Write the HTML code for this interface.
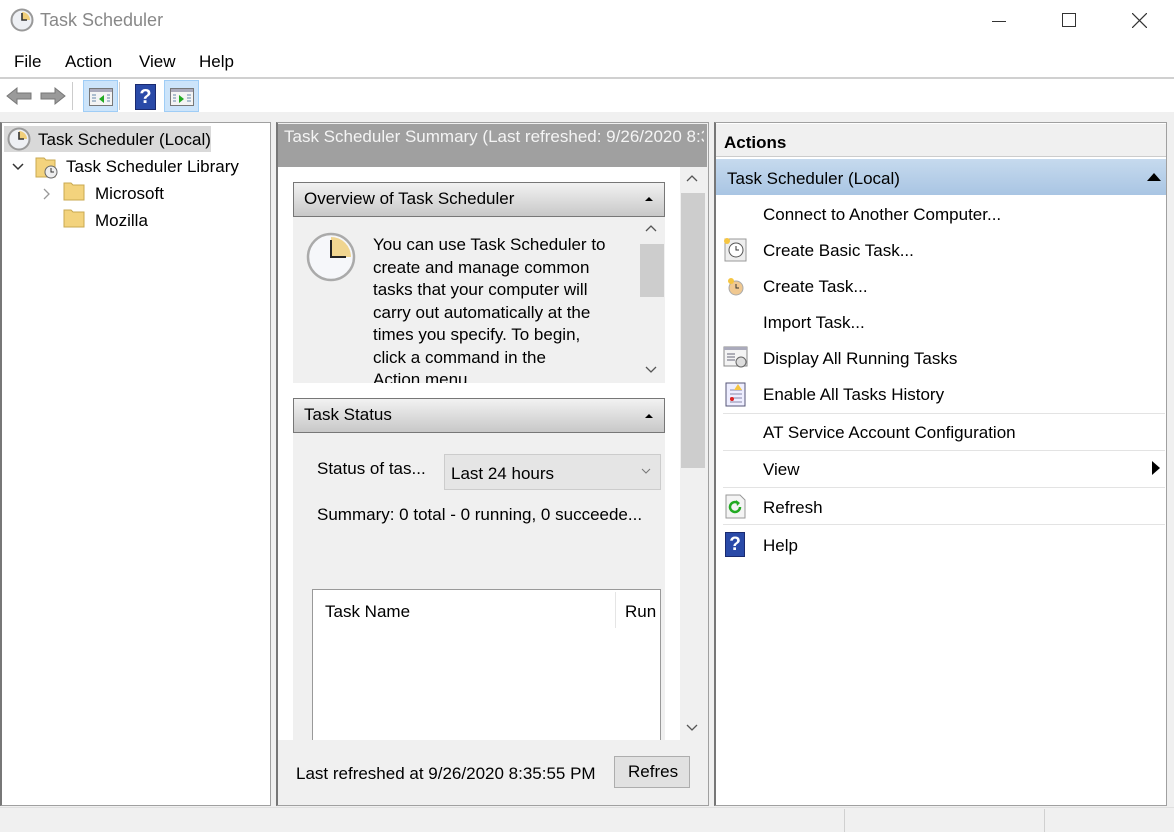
<!DOCTYPE html>
<html><head><meta charset="utf-8"><style>
*{box-sizing:border-box;margin:0;padding:0}
body{width:1174px;height:832px;background:#f0f0f0;font-family:"Liberation Sans",sans-serif;font-size:17px;color:#000;position:relative;overflow:hidden}
.a{position:absolute}
.t{white-space:nowrap}
</style></head><body>
<div class="a" style="left:0;top:0;width:1174px;height:79px;background:#fff"></div>
<svg class="a" style="left:10px;top:8px" width="24" height="24"><circle cx="12" cy="12" r="10.5" fill="#eef0f4" stroke="#999" stroke-width="2"/><path d="M12 12V4A8 8 0 0 1 20 12Z" fill="#f1cf7a"/><path d="M12 5v7h5" stroke="#333" stroke-width="1.6" fill="none"/></svg>
<div class="a t" style="left:40px;top:10px;font-size:18px;color:#888">Task Scheduler</div>
<div class="a" style="left:992px;top:21px;width:14px;height:1px;background:#333"></div>
<div class="a" style="left:1062px;top:13px;width:14px;height:14px;border:1px solid #333"></div>
<svg class="a" style="left:1132px;top:13px" width="15" height="15"><path d="M0 0L15 15M15 0L0 15" stroke="#333" stroke-width="1.2"/></svg>
<div class="a t" style="left:14px;top:52px">File</div>
<div class="a t" style="left:65px;top:52px">Action</div>
<div class="a t" style="left:139px;top:52px">View</div>
<div class="a t" style="left:199px;top:52px">Help</div>
<div class="a" style="left:0;top:77px;width:1174px;height:2px;background:#d0d0d0"></div>
<div class="a" style="left:0;top:79px;width:1174px;height:33px;background:#fff"></div>
<svg class="a" style="left:5px;top:85px" width="62" height="22"><path d="M2 11L12 3V8H26V14H12V19Z" fill="#9a9a9a" stroke="#777"/><path d="M60 11L50 3V8H36V14H50V19Z" fill="#9a9a9a" stroke="#777"/></svg>
<div class="a" style="left:72px;top:82px;width:1px;height:28px;background:#ccc"></div>
<div class="a" style="left:83px;top:80px;width:35px;height:32px;background:#cce4fa;border:1px solid #9fcdf6"></div>
<svg class="a" style="left:89px;top:88px" width="24" height="18"><rect x="0.5" y="0.5" width="23" height="17" fill="#f4f4f4" stroke="#777"/><rect x="1" y="1" width="22" height="3" fill="#aab"/><path d="M15 7v8l-5-4z" fill="#2a2"/><path d="M3 7h4M3 10h4M3 13h4M18 7h3M18 10h3M18 13h3" stroke="#6688aa"/></svg>
<div class="a" style="left:119px;top:82px;width:1px;height:28px;background:#ccc"></div>
<div class="a" style="left:135px;top:84px;width:21px;height:26px;background:#2a4aa8;border:1px solid #1a2a70;color:#fff;font-weight:bold;font-size:20px;text-align:center;line-height:24px">?</div>
<div class="a" style="left:164px;top:80px;width:35px;height:32px;background:#cce4fa;border:1px solid #9fcdf6"></div>
<svg class="a" style="left:170px;top:88px" width="24" height="18"><rect x="0.5" y="0.5" width="23" height="17" fill="#f4f4f4" stroke="#777"/><rect x="1" y="1" width="22" height="3" fill="#aab"/><path d="M9 7v8l5-4z" fill="#2a2"/><path d="M3 7h3M3 10h3M3 13h3M17 7h4M17 10h4M17 13h4" stroke="#6688aa"/></svg>
<div class="a" style="left:0;top:122px;width:271px;height:684px;background:#fff;border:1px solid #a0a0a0;border-left:2px solid #777"></div>
<div class="a" style="left:4px;top:126px;width:207px;height:26px;background:#d9d9d9"></div>
<svg class="a" style="left:7px;top:127px" width="24" height="24"><circle cx="12" cy="12" r="10.5" fill="#eef0f4" stroke="#999" stroke-width="2"/><path d="M12 12V4A8 8 0 0 1 20 12Z" fill="#f1cf7a"/><path d="M12 5v7h5" stroke="#333" stroke-width="1.6" fill="none"/></svg>
<div class="a t" style="left:38px;top:130px">Task Scheduler (Local)</div>
<svg class="a" style="left:12px;top:162px" width="12" height="10"><path d="M1 2l5 5 5-5" stroke="#333" stroke-width="1.5" fill="none"/></svg>
<svg class="a" style="left:34px;top:154px" width="26" height="26"><path d="M2 4h8l2 2h9v17H2z" fill="#f3d37d" stroke="#c9a850"/><circle cx="17" cy="18" r="6" fill="#eee" stroke="#666"/><path d="M17 14v4h3" stroke="#333" fill="none"/></svg>
<div class="a t" style="left:66px;top:157px">Task Scheduler Library</div>
<svg class="a" style="left:42px;top:188px" width="8" height="12"><path d="M2 1l5 5-5 5" stroke="#999" stroke-width="1.3" fill="none"/></svg>
<svg class="a" style="left:63px;top:181px" width="22" height="20"><path d="M1 2h7l2 2h11v15H1z" fill="#f3d37d" stroke="#c9a850"/></svg>
<div class="a t" style="left:95px;top:184px">Microsoft</div>
<svg class="a" style="left:63px;top:208px" width="22" height="20"><path d="M1 2h7l2 2h11v15H1z" fill="#f3d37d" stroke="#c9a850"/></svg>
<div class="a t" style="left:95px;top:211px">Mozilla</div>
<div class="a" style="left:276px;top:122px;width:433px;height:684px;background:#f0f0f0;border:1px solid #a0a0a0;border-left:2px solid #777"></div>
<div class="a" style="left:278px;top:124px;width:429px;height:43px;background:#a0a0a0"></div>
<div class="a t" style="left:284px;top:127px;color:#f4f4f4;width:420px;overflow:hidden">Task Scheduler Summary (Last refreshed: 9/26/2020 8:35:55 PM)</div>
<div class="a" style="left:278px;top:167px;width:402px;height:573px;background:#fff"></div>
<div class="a" style="left:680px;top:167px;width:26px;height:573px;background:#f0f0f0"></div>
<div class="a" style="left:681px;top:193px;width:24px;height:275px;background:#cdcdcd"></div>
<svg class="a" style="left:686px;top:175px" width="12" height="8"><path d="M1 6l5-5 5 5" stroke="#555" stroke-width="1.3" fill="none"/></svg>
<svg class="a" style="left:686px;top:723px" width="12" height="8"><path d="M1 2l5 5 5-5" stroke="#555" stroke-width="1.3" fill="none"/></svg>
<div class="a" style="left:293px;top:182px;width:372px;height:35px;border:1px solid #777;background:linear-gradient(#f2f2f2,#c8c8c8)"></div>
<div class="a t" style="left:304px;top:189px">Overview of Task Scheduler</div>
<svg class="a" style="left:644px;top:196px" width="10" height="6"><path d="M1 5l4-4 4 4z" fill="#000"/></svg>
<div class="a" style="left:293px;top:217px;width:372px;height:166px;background:#f0f0f0;overflow:hidden">
 <svg class="a" style="left:13px;top:15px" width="50" height="50"><circle cx="25" cy="25" r="23" fill="#f6f7fa" stroke="#aaa" stroke-width="2.5"/><path d="M25 25V5A20 20 0 0 1 45 25Z" fill="#f0d590"/><path d="M25 8v17h15" stroke="#222" stroke-width="2" fill="none"/></svg>
 <div class="a t" style="left:80px;top:17px;line-height:22.5px">You can use Task Scheduler to<br>create and manage common<br>tasks that your computer will<br>carry out automatically at the<br>times you specify. To begin,<br>click a command in the<br>Action menu.</div>
 <div class="a" style="left:345px;top:0;width:27px;height:166px;background:#f0f0f0"></div>
 <div class="a" style="left:347px;top:27px;width:24px;height:53px;background:#cdcdcd"></div>
 <svg class="a" style="left:352px;top:8px" width="12" height="8"><path d="M1 6l5-5 5 5" stroke="#555" stroke-width="1.3" fill="none"/></svg>
 <svg class="a" style="left:352px;top:148px" width="12" height="8"><path d="M1 2l5 5 5-5" stroke="#555" stroke-width="1.3" fill="none"/></svg>
</div>
<div class="a" style="left:293px;top:398px;width:372px;height:35px;border:1px solid #777;background:linear-gradient(#f2f2f2,#c8c8c8)"></div>
<div class="a t" style="left:304px;top:405px">Task Status</div>
<svg class="a" style="left:644px;top:413px" width="10" height="6"><path d="M1 5l4-4 4 4z" fill="#000"/></svg>
<div class="a" style="left:293px;top:433px;width:372px;height:307px;background:#f0f0f0"></div>
<div class="a t" style="left:317px;top:459px">Status of tas...</div>
<div class="a" style="left:444px;top:454px;width:217px;height:36px;background:#e5e5e5;border:1px solid #ccc"></div>
<div class="a t" style="left:451px;top:464px">Last 24 hours</div>
<svg class="a" style="left:641px;top:468px" width="10" height="6"><path d="M1 1l4 4 4-4" stroke="#777" fill="none"/></svg>
<div class="a t" style="left:317px;top:505px">Summary: 0 total - 0 running, 0 succeede...</div>
<div class="a" style="left:312px;top:589px;width:349px;height:151px;background:#fff;border:1px solid #999;border-bottom:none"></div>
<div class="a t" style="left:325px;top:602px">Task Name</div>
<div class="a" style="left:615px;top:592px;width:1px;height:36px;background:#e5e5e5"></div>
<div class="a t" style="left:625px;top:602px">Run</div>
<div class="a t" style="left:296px;top:764px">Last refreshed at 9/26/2020 8:35:55 PM</div>
<div class="a" style="left:614px;top:756px;width:76px;height:32px;background:#e1e1e1;border:1px solid #adadad"></div>
<div class="a t" style="left:628px;top:762px">Refres</div>
<div class="a" style="left:714px;top:122px;width:453px;height:684px;background:#fff;border:1px solid #a0a0a0;border-left:2px solid #777"></div>
<div class="a" style="left:716px;top:124px;width:450px;height:33px;background:#f0f0f0;border-bottom:1px solid #ccc"></div>
<div class="a t" style="left:724px;top:133px;font-weight:bold">Actions</div>
<div class="a" style="left:716px;top:159px;width:450px;height:36px;background:linear-gradient(#c6daee,#a9c5e3)"></div>
<div class="a t" style="left:727px;top:169px">Task Scheduler (Local)</div>
<svg class="a" style="left:1147px;top:173px" width="14" height="8"><path d="M0 8L7 0L14 8Z" fill="#000"/></svg>
<div class="a t" style="left:763px;top:205px">Connect to Another Computer...</div>
<svg class="a" style="left:723px;top:237px" width="26" height="26"><rect x="2" y="2" width="21" height="22" fill="#eee" stroke="#999"/><circle cx="13" cy="13" r="7" fill="#fff" stroke="#555"/><path d="M13 9v4h3" stroke="#333" fill="none"/><circle cx="4" cy="4" r="3" fill="#f5c542"/></svg>
<div class="a t" style="left:763px;top:241px">Create Basic Task...</div>
<svg class="a" style="left:725px;top:276px" width="22" height="22"><circle cx="11" cy="12" r="7" fill="#f0c890" stroke="#aaa"/><path d="M11 8v4h3" stroke="#333" fill="none"/><circle cx="6" cy="5" r="3" fill="#f5c542"/></svg>
<div class="a t" style="left:763px;top:277px">Create Task...</div>
<div class="a t" style="left:763px;top:313px">Import Task...</div>
<svg class="a" style="left:723px;top:346px" width="26" height="24"><rect x="1" y="1" width="23" height="19" fill="#f4f4f4" stroke="#888"/><rect x="1" y="1" width="23" height="3" fill="#aab"/><path d="M4 8h8M4 11h8M4 14h8" stroke="#667"/><circle cx="18" cy="16" r="5" fill="#ddd" stroke="#666"/></svg>
<div class="a t" style="left:763px;top:349px">Display All Running Tasks</div>
<svg class="a" style="left:724px;top:382px" width="24" height="26"><rect x="2" y="1" width="19" height="23" fill="#eef" stroke="#557"/><path d="M6 8h12M6 12h12M6 16h12M6 20h12" stroke="#88a"/><path d="M14 2l4 6h-8z" fill="#f5c542"/><circle cx="8" cy="17" r="2" fill="#d22"/></svg>
<div class="a t" style="left:763px;top:385px">Enable All Tasks History</div>
<div class="a" style="left:723px;top:413px;width:442px;height:1px;background:#e3e3e3"></div>
<div class="a t" style="left:763px;top:423px">AT Service Account Configuration</div>
<div class="a" style="left:723px;top:450px;width:442px;height:1px;background:#e3e3e3"></div>
<div class="a t" style="left:763px;top:460px">View</div>
<svg class="a" style="left:1152px;top:461px" width="8" height="14"><path d="M0 0L8 7L0 14Z" fill="#000"/></svg>
<div class="a" style="left:723px;top:487px;width:442px;height:1px;background:#e3e3e3"></div>
<svg class="a" style="left:725px;top:494px" width="22" height="26"><path d="M1 1h14l5 5v18H1z" fill="#f4f4f4" stroke="#999"/><path d="M15 13a5 5 0 1 1-2-4" stroke="#2a2" stroke-width="2.5" fill="none"/><path d="M11 6l4 3-3 3z" fill="#2a2"/></svg>
<div class="a t" style="left:763px;top:498px">Refresh</div>
<div class="a" style="left:723px;top:524px;width:442px;height:1px;background:#e3e3e3"></div>
<div class="a" style="left:725px;top:532px;width:20px;height:25px;background:#2a4aa8;border:1px solid #1a2a70;color:#fff;font-weight:bold;font-size:19px;text-align:center;line-height:23px">?</div>
<div class="a t" style="left:763px;top:536px">Help</div>
<div class="a" style="left:0;top:807px;width:1174px;height:1px;background:#e0e0e0"></div>
<div class="a" style="left:844px;top:809px;width:1px;height:23px;background:#d0d0d0"></div>
<div class="a" style="left:1044px;top:809px;width:1px;height:23px;background:#d0d0d0"></div>
</body></html>
